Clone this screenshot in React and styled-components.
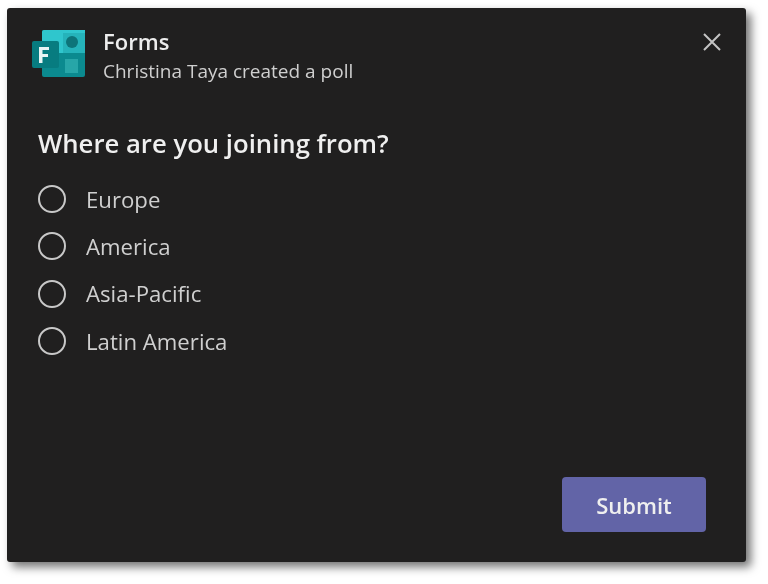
import React from 'react';
import styled, { createGlobalStyle } from 'styled-components';

const GlobalStyle = createGlobalStyle`
  html, body {
    margin: 0;
    background: #ffffff;
    font-family: "Open Sans", "Noto Sans", "Liberation Sans", sans-serif;
  }
`;

const Page = styled.div`
  width: 768px;
  height: 584px;
  padding: 8px 0 0 7px;
  box-sizing: border-box;
  overflow: hidden;
`;

const Card = styled.div`
  width: 739px;
  height: 554px;
  box-sizing: border-box;
  padding: 21px 24px 30px 23px;
  display: flex;
  flex-direction: column;
  background: #201f1f;
  border-radius: 3px;
  box-shadow: 5px 5px 10px rgba(0, 0, 0, 0.55);
  filter: blur(0.7px);
`;

const Header = styled.div`
  display: flex;
  align-items: flex-start;
`;

const Logo = styled.svg`
  width: 56px;
  height: 50px;
  flex: none;
`;

const HeaderText = styled.div`
  flex: 1;
  margin-left: 17px;
`;

const Title = styled.div`
  font-size: 22px;
  line-height: 25px;
  font-weight: 600;
  color: #ececec;
`;

const Subtitle = styled.div`
  font-size: 19px;
  line-height: 24px;
  margin-top: 5px;
  color: #cfcfcf;
`;

const CloseButton = styled.button`
  width: 20px;
  height: 20px;
  padding: 0;
  margin: 3px 0 0 0;
  border: 0;
  background: none;
  color: #c4c4c4;
  display: flex;
`;

const Question = styled.h2`
  margin: 44px 0 0 8px;
  font-size: 25.7px;
  line-height: 34px;
  font-weight: 600;
  color: #efefef;
`;

const Options = styled.div`
  display: flex;
  flex-direction: column;
  gap: 19.4px;
  margin: 24px 0 0 8px;
`;

const Option = styled.label`
  display: flex;
  align-items: center;
  gap: 20px;
  height: 28px;
  font-size: 22.2px;
  color: #cfcfcf;
`;

const Radio = styled.span`
  width: 28px;
  height: 28px;
  box-sizing: border-box;
  border: 2px solid #c8c8c8;
  border-radius: 50%;
  flex: none;
`;

const Footer = styled.div`
  margin-top: auto;
  display: flex;
  justify-content: flex-end;
  padding-right: 16px;
`;

const SubmitButton = styled.button`
  width: 144px;
  height: 55px;
  border: 0;
  border-radius: 4px;
  background: #6264a7;
  color: #efefef;
  font-family: inherit;
  font-size: 22px;
  font-weight: 600;
`;

const FormsLogo = () => (
  <Logo viewBox="0 0 56 50">
    <rect x="12" y="1" width="43" height="47" rx="2" fill="#0b8a8f" />
    <path d="M12 3a2 2 0 0 1 2-2h41v23H12z" fill="#2fc6cd" />
    <rect x="33" y="4" width="22" height="20" fill="#25b3ba" />
    <circle cx="42" cy="13" r="6" fill="#0d7479" />
    <rect x="35" y="30" width="13" height="14" fill="#27a6a8" />
    <rect x="2" y="12" width="27" height="27" rx="2" fill="#077c80" />
    <path d="M9 18h10v3h-6.500v4H18v3h-5.500v6H9z" fill="#e8f4f4" />
  </Logo>
);

const options = ['Europe', 'America', 'Asia-Pacific', 'Latin America'];

const App = () => {
  return (
    <Page>
      <GlobalStyle />
      <Card>
        <Header>
          <FormsLogo />
          <HeaderText>
            <Title>Forms</Title>
            <Subtitle>Christina Taya created a poll</Subtitle>
          </HeaderText>
          <CloseButton aria-label="Close">
            <svg viewBox="0 0 20 20" width="20" height="20" fill="none" stroke="currentColor" strokeWidth="2">
              <path d="M2 2l16 16M18 2L2 18" />
            </svg>
          </CloseButton>
        </Header>
        <Question>Where are you joining from?</Question>
        <Options>
          {options.map((name) => (
            <Option key={name}>
              <Radio />
              {name}
            </Option>
          ))}
        </Options>
        <Footer>
          <SubmitButton>Submit</SubmitButton>
        </Footer>
      </Card>
    </Page>
  );
};

export default App;
